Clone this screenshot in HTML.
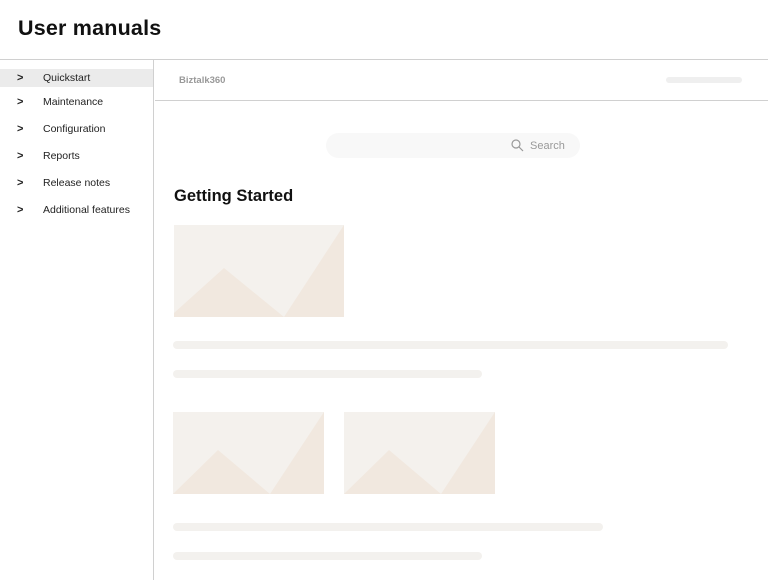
<!DOCTYPE html>
<html><head><meta charset="utf-8"><style>
*{margin:0;padding:0;box-sizing:border-box}
body{width:768px;height:580px;background:#fff;font-family:"Liberation Sans",sans-serif;position:relative;overflow:hidden;color:#111}
.abs{position:absolute}
h1{position:absolute;left:18px;top:16px;font-size:21.5px;font-weight:bold;letter-spacing:0.2px}
.nav{position:absolute;left:0;font-size:10.5px;color:#222;width:153px;height:18px;line-height:18px}
.nav b{position:absolute;left:17px;font-size:11px;font-weight:900}
.nav span{position:absolute;left:43px}
.bar{position:absolute;background:#f3f1ee;border-radius:4px;height:8px}
</style></head><body>
<h1>User manuals</h1>
<div class="abs" style="left:0;top:59px;width:768px;height:1px;background:#d0d0d0"></div>
<div class="abs" style="left:153px;top:60px;width:1px;height:520px;background:#d0d0d0"></div>
<div class="abs" style="left:155px;top:100px;width:613px;height:1px;background:#d0d0d0"></div>
<div class="abs" style="left:0;top:69px;width:153px;height:18px;background:#ebebeb"></div>
<div class="nav" style="top:69px"><b>&gt;</b><span>Quickstart</span></div>
<div class="nav" style="top:93px"><b>&gt;</b><span>Maintenance</span></div>
<div class="nav" style="top:120px"><b>&gt;</b><span>Configuration</span></div>
<div class="nav" style="top:147px"><b>&gt;</b><span>Reports</span></div>
<div class="nav" style="top:174px"><b>&gt;</b><span>Release notes</span></div>
<div class="nav" style="top:201px"><b>&gt;</b><span>Additional features</span></div>
<div class="abs" style="left:179px;top:75px;font-size:9.5px;color:#999;font-weight:bold">Biztalk360</div>
<div class="abs" style="left:666px;top:77px;width:76px;height:6px;border-radius:3px;background:#efefef"></div>
<div class="abs" style="left:326px;top:133px;width:254px;height:25px;border-radius:13px;background:#f8f8f8"></div>
<svg class="abs" style="left:511px;top:139px" width="13" height="13" viewBox="0 0 13 13"><circle cx="5" cy="5" r="4" fill="none" stroke="#999" stroke-width="1.2"/><line x1="8" y1="8" x2="12" y2="12" stroke="#999" stroke-width="1.2"/></svg>
<div class="abs" style="left:530px;top:140px;font-size:11px;color:#999">Search</div>
<div class="abs" style="left:174px;top:187px;font-size:16.5px;font-weight:bold">Getting Started</div>
<svg class="abs" style="left:174px;top:225px" width="170" height="92" viewBox="0 0 170 92"><rect width="170" height="92" fill="#f4f1ed"/><polygon points="0,88 50,43 110,92 0,92" fill="#f1e8df"/><polygon points="110,92 170,0 170,92" fill="#f1e8df"/></svg>
<div class="bar" style="left:173px;top:341px;width:555px"></div>
<div class="bar" style="left:173px;top:370px;width:309px"></div>
<svg class="abs" style="left:173px;top:412px" width="151" height="82" viewBox="0 0 151 82"><rect width="151" height="82" fill="#f4f1ed"/><polygon points="0,82 45,38 97,82" fill="#f1e8df"/><polygon points="97,82 151,0 151,82" fill="#f1e8df"/></svg>
<svg class="abs" style="left:344px;top:412px" width="151" height="82" viewBox="0 0 151 82"><rect width="151" height="82" fill="#f4f1ed"/><polygon points="0,82 45,38 97,82" fill="#f1e8df"/><polygon points="97,82 151,0 151,82" fill="#f1e8df"/></svg>
<div class="bar" style="left:173px;top:523px;width:430px"></div>
<div class="bar" style="left:173px;top:552px;width:309px"></div>
</body></html>
